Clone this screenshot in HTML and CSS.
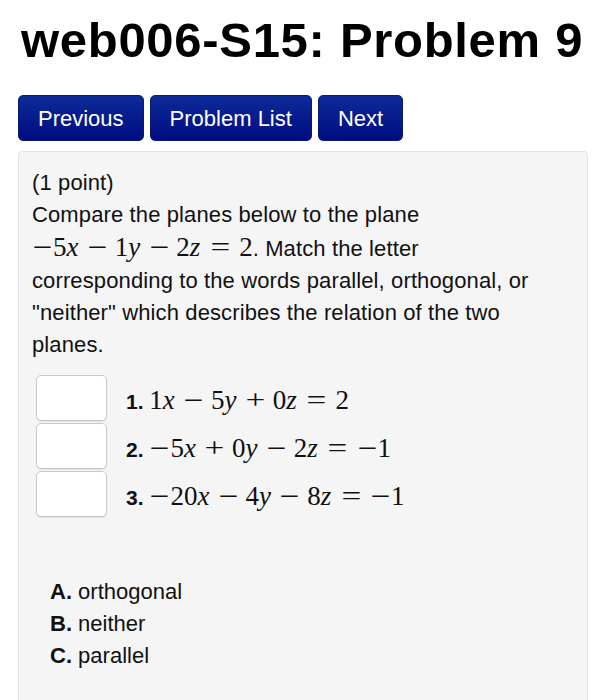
FILE: index.html
```html
<!DOCTYPE html>
<html lang="en">
<head>
  <meta charset="UTF-8">
  <meta name="viewport" content="width=device-width, initial-scale=1.0">
  <title>web006-S15: Problem 9</title>
  <link rel="stylesheet" href="styles.css">
</head>
<body>
  <h1 class="title">web006-S15: Problem 9</h1>

  <div class="nav">
    <a class="nav-btn" href="#">Previous</a>
    <a class="nav-btn" href="#">Problem List</a>
    <a class="nav-btn" href="#">Next</a>
  </div>

  <div class="problem">
    <p class="intro">
      (1 point)<br>
      Compare the planes below to the plane
      <span class="math"><span class="mo">&minus;</span>5<i>x</i><span class="mo bin">&minus;</span>1<i>y</i><span class="mo bin">&minus;</span>2<i>z</i><span class="mo rel">=</span>2</span>. Match the letter corresponding to the words parallel, orthogonal, or "neither" which describes the relation of the two planes.
    </p>

    <div class="matches">
      <div class="match-row">
        <span class="answer-box"></span>
        <span class="match-label"><b>1.</b> <span class="math">1<i>x</i><span class="mo bin">&minus;</span>5<i>y</i><span class="mo bin">+</span>0<i>z</i><span class="mo rel">=</span>2</span></span>
      </div>
      <div class="match-row">
        <span class="answer-box"></span>
        <span class="match-label"><b>2.</b> <span class="math"><span class="mo">&minus;</span>5<i>x</i><span class="mo bin">+</span>0<i>y</i><span class="mo bin">&minus;</span>2<i>z</i><span class="mo rel">=</span><span class="mo">&minus;</span>1</span></span>
      </div>
      <div class="match-row">
        <span class="answer-box"></span>
        <span class="match-label"><b>3.</b> <span class="math"><span class="mo">&minus;</span>20<i>x</i><span class="mo bin">&minus;</span>4<i>y</i><span class="mo bin">&minus;</span>8<i>z</i><span class="mo rel">=</span><span class="mo">&minus;</span>1</span></span>
      </div>
    </div>

    <ul class="choices">
      <li><b>A.</b> orthogonal</li>
      <li><b>B.</b> neither</li>
      <li><b>C.</b> parallel</li>
    </ul>
  </div>
</body>
</html>
```

FILE: styles.css
```css
body {
  font-family: 'Liberation Sans', Arial, sans-serif;
  color: #111;
  background: #fff;
  margin: 0;
  padding: 12px 9px 0 18px;
}

.title {
  font-size: 49px;
  line-height: 56px;
  letter-spacing: 0.7px;
  font-weight: bold;
  margin: 0;
  padding-left: 3px;
  color: #000;
}

.nav {
  display: flex;
  gap: 6px;
  margin-top: 27px;
}

.nav-btn {
  display: block;
  height: 46px;
  line-height: 46px;
  padding: 0 19px;
  font-size: 22px;
  color: #fff;
  text-decoration: none;
  background: linear-gradient(to bottom, #0d2a98, #000c82);
  border: 1px solid #0a1a6e;
  border-radius: 5px;
  box-sizing: border-box;
}

.problem {
  margin-top: 10px;
  background: #f5f5f5;
  border: 1px solid #e3e3e3;
  border-radius: 4px;
  padding: 15px 24px 60px 13px;
}

.intro {
  margin: 0;
  font-size: 22px;
  line-height: 32px;
  letter-spacing: 0.12px;
}

/* inline math, roughly KaTeX-like */
.math {
  font-family: 'Liberation Serif', 'Times New Roman', serif;
  font-size: 27px;
  white-space: nowrap;
  letter-spacing: 0;
}

.math i {
  padding-right: 0.06em;
}

.mo {
  display: inline-block;
  width: 0.78em;
  text-align: center;
  transform: scaleX(1.3);
}

.mo.bin {
  margin: 0 0.25em;
}

.mo.rel {
  margin: 0 0.3em;
}

.matches {
  margin-top: 14px;
  padding-left: 4px;
}

.match-row {
  display: flex;
  align-items: center;
  margin-bottom: 2px;
}

.answer-box {
  width: 71px;
  height: 46px;
  background: #fff;
  border: 1px solid #c9c9c9;
  border-radius: 5px;
  box-sizing: border-box;
  box-shadow: 0 1px 1px rgba(0, 0, 0, 0.08);
}

.match-label {
  margin-left: 19px;
  font-size: 21px;
  padding-top: 4px;
}

.choices {
  list-style: none;
  margin: 59px 0 0;
  padding-left: 18px;
  font-size: 22px;
  line-height: 32px;
}
```
